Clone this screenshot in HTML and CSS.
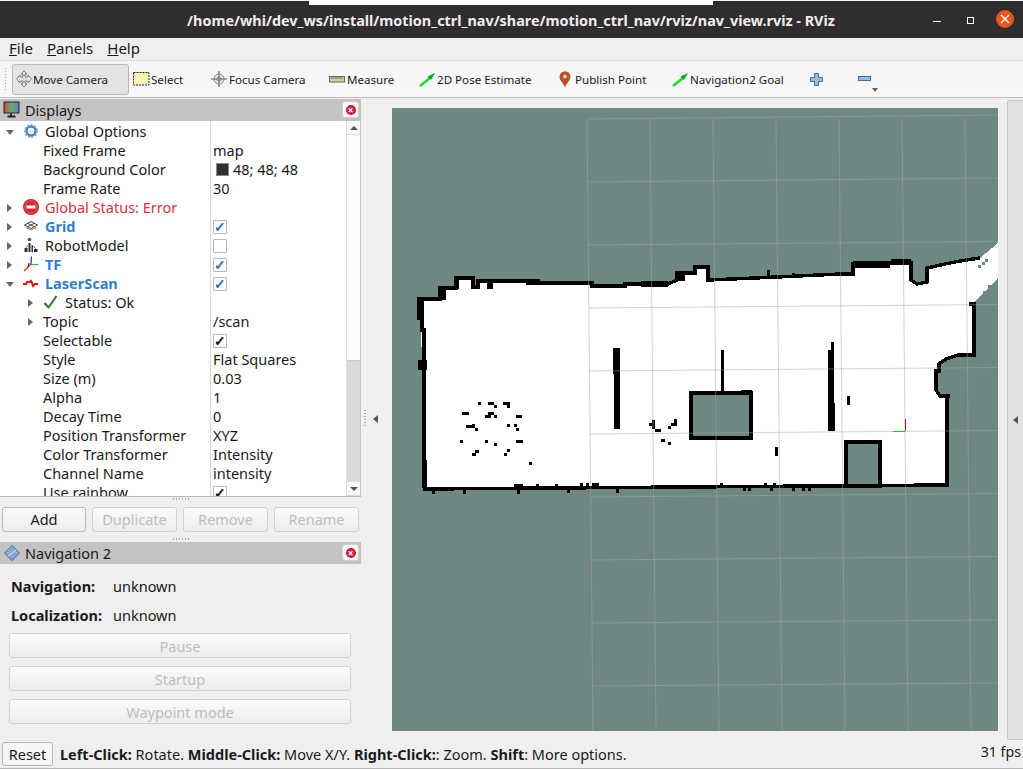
FILE: index.html
```html
<!DOCTYPE html>
<html lang="en">
<head>
<meta charset="utf-8">
<title>RViz</title>
<link rel="stylesheet" href="styles.css">
</head>
<body>
<div class="app">
  <div class="other-window"></div>
  <header class="titlebar">
    <span class="title">/home/whi/dev_ws/install/motion_ctrl_nav/share/motion_ctrl_nav/rviz/nav_view.rviz - RViz</span>
    <span class="win-min"></span>
    <span class="win-max"></span>
    <span class="win-close"><svg width="18" height="18" viewBox="0 0 18 18"><path d="M5 5l8 8M13 5l-8 8" stroke="#fff" stroke-width="1.4"/></svg></span>
  </header>
  <nav class="menubar">
    <span class="menu"><u>F</u>ile</span>
    <span class="menu"><u>P</u>anels</span>
    <span class="menu"><u>H</u>elp</span>
  </nav>
  <div class="toolbar">
    <span class="grip"></span>
    <div class="tool active t-move">
      <svg class="ico" width="18" height="18" viewBox="0 0 18 18"><path d="M9 1l3 3h-2v3h3V5l3.500 4-3.500 4v-2h-3v3h2l-3 3-3-3h2v-3H5v2L1.500 9 5 5v2h3V4H6z" fill="#f4f4f4" stroke="#777" stroke-width="1"/><path d="M9 4v10M4 9h10" stroke="#aaa" stroke-dasharray="1 1"/></svg>
      <span>Move Camera</span>
    </div>
    <div class="tool t-select">
      <svg class="ico" width="17" height="14" viewBox="0 0 17 14"><rect x=".5" y=".5" width="15.500" height="12.500" fill="#fbf6b5" stroke="#222" stroke-dasharray="2 1"/></svg>
      <span>Select</span>
    </div>
    <div class="tool t-focus">
      <svg class="ico" width="18" height="18" viewBox="0 0 18 18"><circle cx="9" cy="9" r="5" fill="#e8e8e8" stroke="#888"/><circle cx="9" cy="9" r="2.200" fill="#ccc" stroke="#888"/><path d="M9 1v16M1 9h16" stroke="#888" stroke-width="1.600"/></svg>
      <span>Focus Camera</span>
    </div>
    <div class="tool t-measure">
      <svg class="ico" width="16" height="7" viewBox="0 0 16 7"><rect x=".5" y=".5" width="15" height="5.500" fill="#d9cd95" stroke="#666"/><path d="M3 1v2M5 1v2M7 1v2M9 1v2M11 1v2M13 1v2" stroke="#777"/></svg>
      <span>Measure</span>
    </div>
    <div class="tool t-pose">
      <svg class="ico" width="17" height="15" viewBox="0 0 17 15"><path d="M1 14L11 6" stroke="#18e028" stroke-width="2.600"/><path d="M16 1L8.500 4.500l3.500 3.500z" fill="#12a020"/></svg>
      <span>2D Pose Estimate</span>
    </div>
    <div class="tool t-pin">
      <svg class="ico" width="12" height="17" viewBox="0 0 12 17"><path d="M6 16.500C4.500 12 .5 9.500.5 5.700a5.500 5.500 0 0 1 11 0C11.500 9.500 7.500 12 6 16.500z" fill="#b5532d"/><circle cx="6" cy="5.500" r="2" fill="#f0c8b0"/></svg>
      <span>Publish Point</span>
    </div>
    <div class="tool t-goal">
      <svg class="ico" width="17" height="15" viewBox="0 0 17 15"><path d="M1 14L11 6" stroke="#18e028" stroke-width="2.600"/><path d="M16 1L8.500 4.500l3.500 3.500z" fill="#12a020"/></svg>
      <span>Navigation2 Goal</span>
    </div>
    <div class="tool t-plus">
      <svg width="13" height="13" viewBox="0 0 13 13"><path d="M4.500.5h4v4h4v4h-4v4h-4v-4h-4v-4h4z" fill="#9dbbe0" stroke="#3a6ea8"/></svg>
    </div>
    <div class="tool t-minus">
      <svg width="13" height="6" viewBox="0 0 13 6"><rect x=".5" y=".5" width="12" height="4" fill="#9dbbe0" stroke="#3a6ea8"/></svg>
      <span class="more"></span>
    </div>
  </div>
  <main class="main">
    <aside class="dock">
      <div class="panel-title">
        <svg class="panel-ico" width="18" height="18" viewBox="0 0 18 18"><defs><linearGradient id="scr"><stop offset="0" stop-color="#c8474a"/><stop offset=".5" stop-color="#62b06a"/><stop offset="1" stop-color="#6a78c8"/></linearGradient></defs><rect x="1" y="1" width="15" height="11" fill="url(#scr)" stroke="#222"/><path d="M8 12.500v2M4.500 15.500h8" stroke="#222" stroke-width="2"/></svg>
        <span>Displays</span>
        <span class="closer"><i>×</i></span>
      </div>
      <div class="tree">
        <div class="rows">
          <div class="row"><div class="name l1"><span class="arr open"></span><svg class="ti" width="16" height="16" viewBox="0 0 16 16"><circle cx="8" cy="8" r="4.500" fill="none" stroke="#4d7fc4" stroke-width="2.500"/><circle cx="8" cy="8" r="6" fill="none" stroke="#7aa0d8" stroke-width="1.800" stroke-dasharray="2 1.400"/><circle cx="8" cy="8" r="2" fill="#dde8f6"/></svg><span>Global Options</span></div><div class="val"></div></div>
          <div class="row"><div class="name l2">Fixed Frame</div><div class="val">map</div></div>
          <div class="row"><div class="name l2">Background Color</div><div class="val"><span class="swatch"></span>48; 48; 48</div></div>
          <div class="row"><div class="name l2">Frame Rate</div><div class="val">30</div></div>
          <div class="row"><div class="name l1"><span class="arr"></span><svg class="ti" width="16" height="16" viewBox="0 0 16 16"><circle cx="8" cy="8" r="8" fill="#cf1f25"/><circle cx="8" cy="8" r="6.300" fill="#d9292e" stroke="#e8e8e8" stroke-width=".3"/><rect x="3.500" y="6.500" width="9" height="3" fill="#fff"/></svg><span class="err">Global Status: Error</span></div><div class="val"></div></div>
          <div class="row"><div class="name l1"><span class="arr"></span><svg class="ti" width="16" height="16" viewBox="0 0 16 16"><path d="M1.500 7L8 3.500 14.500 7 8 10.500zM4.500 5.200L11.500 8.800M11.500 5.200L4.500 8.800" fill="none" stroke="#444"/><path d="M3 9.500L8 12l5-2.500" fill="none" stroke="#777"/></svg><b class="on">Grid</b></div><div class="val"><span class="chk blue">✓</span></div></div>
          <div class="row"><div class="name l1"><span class="arr"></span><svg class="ti" width="16" height="16" viewBox="0 0 16 16"><circle cx="6.500" cy="2.500" r="1.800" fill="#3a5a8c"/><path d="M1.500 15v-4h3v4zM5.500 15V6h2v9zM8.500 15V8h1.500v7zM11 15v-3h3.500v3z" fill="#333"/><path d="M3 11l3-4M9 8l4 4" stroke="#777"/></svg><span>RobotModel</span></div><div class="val"><span class="chk"></span></div></div>
          <div class="row"><div class="name l1"><span class="arr"></span><svg class="ti" width="16" height="16" viewBox="0 0 16 16"><path d="M8 8L8.500 .5" stroke="#2030d0" stroke-width="1.200"/><path d="M8 8.500h7.500" stroke="#20d020" stroke-width="1.200"/><path d="M8 8L1 15" stroke="#e02020" stroke-width="1.200"/><path d="M5 11l1-4" stroke="#222"/></svg><b class="on">TF</b></div><div class="val"><span class="chk blue">✓</span></div></div>
          <div class="row"><div class="name l1"><span class="arr open"></span><svg class="ti" width="16" height="16" viewBox="0 0 16 16"><path d="M0 9h3l1-2h3l1-1 1 2 1 3 1-1 1-1h3" fill="none" stroke="#ee1010" stroke-width="2"/></svg><b class="on">LaserScan</b></div><div class="val"><span class="chk blue">✓</span></div></div>
          <div class="row"><div class="name l3"><span class="arr"></span><svg class="ti" width="16" height="16" viewBox="0 0 16 16"><path d="M1.500 9l4 4.500L13.500 2" fill="none" stroke="#2a7a2a" stroke-width="2"/></svg><span>Status: Ok</span></div><div class="val"></div></div>
          <div class="row"><div class="name l2 has-arr"><span class="arr"></span>Topic</div><div class="val">/scan</div></div>
          <div class="row"><div class="name l2">Selectable</div><div class="val"><span class="chk">✓</span></div></div>
          <div class="row"><div class="name l2">Style</div><div class="val">Flat Squares</div></div>
          <div class="row"><div class="name l2">Size (m)</div><div class="val">0.03</div></div>
          <div class="row"><div class="name l2">Alpha</div><div class="val">1</div></div>
          <div class="row"><div class="name l2">Decay Time</div><div class="val">0</div></div>
          <div class="row"><div class="name l2">Position Transformer</div><div class="val">XYZ</div></div>
          <div class="row"><div class="name l2">Color Transformer</div><div class="val">Intensity</div></div>
          <div class="row"><div class="name l2">Channel Name</div><div class="val">intensity</div></div>
          <div class="row"><div class="name l2">Use rainbow</div><div class="val"><span class="chk">✓</span></div></div>
        </div>
        <div class="vscroll">
          <div class="sb-btn"><span class="up"></span></div>
          <div class="sb-thumb"></div>
          <div class="sb-track"></div>
          <div class="sb-btn"><span class="down"></span></div>
        </div>
      </div>
      <div class="hgrip"></div>
      <div class="actions">
        <button class="btn">Add</button>
        <button class="btn" disabled>Duplicate</button>
        <button class="btn" disabled>Remove</button>
        <button class="btn" disabled>Rename</button>
      </div>
      <div class="hgrip second"></div>
      <div class="panel-title nav-title">
        <svg class="panel-ico" width="18" height="18" viewBox="0 0 18 18"><path d="M9 1.500L16.500 9 9 16.500 1.500 9z" fill="#8ea6d6" stroke="#3f5f9f"/><path d="M5 12L13 6" stroke="#dfe7f6"/></svg>
        <span>Navigation 2</span>
        <span class="closer"><i>×</i></span>
      </div>
      <div class="nav-body">
        <div class="status-line"><b>Navigation:</b><span>unknown</span></div>
        <div class="status-line"><b>Localization:</b><span>unknown</span></div>
        <button class="btn wide" disabled>Pause</button>
        <button class="btn wide" disabled>Startup</button>
        <button class="btn wide" disabled>Waypoint mode</button>
      </div>
    </aside>
    <section class="center">
      <div class="side-split"><span class="dots"></span><span class="tri-left"></span></div>
      <svg class="view" width="606" height="623" viewBox="392 108 606 623">
        <g shape-rendering="crispEdges">
          <path fill="#fff" d="M421 299H440V288H456V278H473V287H478V281H528V283H592V286H625V284H668L677 280V273H695V267H708V280L755 278 840 274H853V264L890 263H911V280L917 284 927 282V268L945 264 960 261 980 258 998 243V278L973 304V355H958L946 359 939 364V371H936V390L940 396H947V485L423 489Z"/>
          <path fill="none" stroke="#000" stroke-width="3.500" d="M424 488V330H422V299H440V288H456V278H473V287H478V281H528V283H592V286H625V284H668L677 280V273H695V267H708V280L755 278 840 274H853V264L890 263H911V280L917 284 927 282V268L945 264 960 261 980 258"/>
          <path fill="none" stroke="#000" stroke-width="3.500" d="M969 304H974V355H958L946 359 939 364V371H936V390L940 396H950M947 396V485L423 489"/>
          <path fill="#000" d="M417 297h7v23h-7zM418 360h9v10h-9zM422 460h5v28h-5zM439 286h7v14h-7zM455 276h4v13h-4zM455 276h19v4h-19zM471 280h4v9h-4zM477 279h8v4h-8zM487 280h6v9h-6zM528 279h12v5h-12zM641 281h27v6h-27zM676 271h9v10h-9zM853 261h37v7h-37zM891 259h20v3h-20zM972 306h3v17h-3zM767 270h3v8h-3zM792 273h3v4h-3zM514 484h9v4h-9zM536 484h3v4h-3zM555 484h3v4h-3zM580 483h3v4h-3zM586 483h3v4h-3zM592 483h7v4h-7zM720 483h3v3h-3zM764 483h3v3h-3zM773 483h3v3h-3zM432 490h3v4h-3zM463 490h3v4h-3zM517 490h3v4h-3zM567 489h3v4h-3zM616 489h3v4h-3zM743 486h3v5h-3zM748 486h3v5h-3zM770 486h3v5h-3zM792 486h3v5h-3zM802 486h3v5h-3zM808 486h3v5h-3z"/>
          <path fill="#000" d="M613 348h7v26h-7zM614 374h6v55h-6zM721 350h3v43h-3zM831 342h3v8h-3zM828 350h6v53h-6zM828 403h7v28h-7zM847 396h3v9h-3zM775 447h3v9h-3z"/>
          <path fill="#000" d="M478 402h3v3h-3zM488 402h6v3h-6zM494 405h3v3h-3zM503 402h7v3h-7zM507 405h3v3h-3zM462 412h7v3h-7zM488 412h6v3h-6zM485 415h6v3h-6zM494 415h3v3h-3zM516 415h6v3h-6zM466 425h9v3h-9zM472 424h3v3h-3zM475 428h3v3h-3zM507 424h3v3h-3zM514 424h3v3h-3zM516 428h3v3h-3zM460 440h3v3h-3zM485 440h3v3h-3zM494 443h3v3h-3zM516 440h7v3h-7zM475 450h4v3h-4zM472 453h4v3h-4zM507 449h3v3h-3zM504 453h3v3h-3zM529 462h3v3h-3zM649 423h6v3h-6zM652 420h3v9h-3zM655 429h6v3h-6zM668 426h3v3h-3zM671 423h6v3h-6zM674 419h3v5h-3zM661 439h4v3h-4zM668 442h3v3h-3z"/>
          <path fill="#6f8782" stroke="#000" stroke-width="3.500" d="M691 393H751V438H691Z"/>
          <path fill="#000" d="M741 390h11v5h-11z"/>
          <path fill="#6f8782" stroke="#000" stroke-width="3.500" d="M846 442H880V486H846Z"/>
          <path fill="#6f8782" d="M985 259h3v3h-3zM982 262h3v3h-3zM978 265h3v3h-3zM997 278h3v3h-3zM988 285h3v3h-3zM983 291h3v3h-3z"/>
        </g>
        <g class="grid">
          <path d="M587 119L593 731M650 119L656 731M713 119L719 731M776 119L782 731M839 119L845 731M902 119L908 731M965 119L971 731"/>
          <path d="M587 119L998 115M588 182L998 178M588 245L998 241.500M589 308L998 304.500M589 371L998 367.500M590 434L998 430.500M591 497L998 493.500M591 560L998 556.500M592 623L998 620M592 686L998 683"/>
        </g>
        <path d="M893 431.500h12" stroke="#1fc21f" stroke-width="1.500" fill="none" shape-rendering="crispEdges"/>
        <path d="M905.500 419v12" stroke="#c8102a" stroke-width="1.500" fill="none" shape-rendering="crispEdges"/>
      </svg>
      <div class="gap-right"></div>
    </section>
    <aside class="right-dock"><span class="tri-left"></span></aside>
  </main>
  <footer class="statusbar">
    <button class="btn reset">Reset</button>
    <span class="help"><b>Left-Click:</b> Rotate. <b>Middle-Click:</b> Move X/Y. <b>Right-Click:</b>: Zoom. <b>Shift</b>: More options.</span>
    <span class="fps">31 fps</span>
  </footer>
</div>
</body>
</html>
```
FILE: styles.css
```css
* { box-sizing: border-box; }
html, body { margin: 0; padding: 0; }
body { width: 1023px; height: 769px; overflow: hidden; background: #efefef; }
.app {
  position: relative; display: flex; flex-direction: column; width: 1023px; height: 769px;
  font-family: "Noto Sans", "Open Sans", sans-serif; font-size: 14.5px; color: #1a1a1a; background: #efefef;
}
.other-window { position: absolute; z-index: 1; left: 309px; top: 0; width: 404px; height: 5px; background: #fff; }
.titlebar {
  position: relative; height: 38px; flex: none; display: flex; align-items: center; justify-content: center;
  background: #302d2e; border-top: 1px solid #f4f4f4;
}
.title { color: #f0eeee; font-weight: 700; font-size: 14.4px; margin-right: 1px; padding-top: 2px; white-space: nowrap; }
.win-min { position: absolute; left: 933px; top: 20px; width: 8px; height: 1px; background: #fff; }
.win-max { position: absolute; left: 967px; top: 16px; width: 7px; height: 7px; border: 1px solid #fff; }
.win-close {
  position: absolute; left: 996px; top: 9px; width: 18px; height: 18px; border-radius: 50%; background: #e9541f;
}
.menubar { height: 22px; flex: none; display: flex; align-items: center; gap: 14px; padding: 0 0 3px 9px; background: #efefef; font-size: 15px; }
.toolbar {
  height: 38px; flex: none; display: flex; align-items: center; padding-left: 4px;
  background: linear-gradient(#f5f5f5, #f8f8f8); border-top: 1px solid #dcdcdc; border-bottom: 1px solid #bdbdbd;
  font-size: 11.6px; position: relative;
}
.grip { width: 4px; height: 24px; margin-right: 4px; background-image: radial-gradient(#aaa 40%, transparent 45%); background-size: 3px 3px; }
.tool { display: flex; align-items: center; flex: none; height: 31px; white-space: nowrap; position: relative; }
.ico { flex: none; }
.active { background: #e4e4e4; border: 1px solid #b8b8b8; border-radius: 3px; padding-left: 2px; }
.t-move { width: 117px; margin-right: 4px; }
.t-select { width: 77px; gap: 1px; }
.t-focus { width: 119px; gap: 1px; }
.t-measure { width: 90px; gap: 2px; }
.t-pose { width: 140px; gap: 1px; }
.t-pin { width: 113px; gap: 4px; }
.t-goal { width: 138px; gap: 1px; }
.t-plus { width: 48px; }
.t-minus { width: 30px; }
.more {
  position: absolute; left: 14px; top: 24px; width: 0; height: 0;
  border-left: 3px solid transparent; border-right: 3px solid transparent; border-top: 4px solid #666;
}
.main { flex: 1; min-height: 0; display: flex; padding-top: 1px; }
.dock { width: 361px; flex: none; display: flex; flex-direction: column; }
.panel-title {
  height: 22px; flex: none; display: flex; align-items: center; background: #c3c3c3; padding-left: 3px; position: relative;
}
.panel-ico { margin-right: 4px; flex: none; }
.closer {
  position: absolute; right: 2px; top: 2px; width: 17px; height: 17px; background: #f7f7f7; border: 1px solid #d0d0d0; border-radius: 3px;
  display: flex; align-items: center; justify-content: center;
}
.closer i {
  width: 10px; height: 10px; border-radius: 50%; background: #d01c3c; color: #fff; font-style: normal; font-size: 10px; line-height: 10px;
  text-align: center; font-weight: 700;
}
.tree { height: 376px; flex: none; display: flex; background: #fff; border-bottom: 1px solid #b8b8b8; border-right: 1px solid #c4c4c4; overflow: hidden; }
.rows { flex: 1; min-width: 0; padding-top: 1px; }
.row { height: 19px; display: flex; align-items: center; white-space: nowrap; }
.name { width: 211px; height: 19px; flex: none; position: relative; line-height: 19px; }
.name::after { content: ""; position: absolute; right: 0; top: -1px; bottom: -1px; width: 1px; background: #d8d8d8; }
.val { flex: 1; padding-left: 2px; line-height: 19px; display: flex; align-items: center; height: 19px; }
.l1 { padding-left: 45px; }
.l2 { padding-left: 43px; }
.l3 { padding-left: 65px; }
.arr {
  position: absolute; left: 7px; top: 6px; width: 0; height: 0;
  border-top: 4px solid transparent; border-bottom: 4px solid transparent; border-left: 5px solid #666;
}
.arr.open { left: 6px; top: 8px; border: 4px solid transparent; border-top: 5px solid #666; border-bottom: 0; }
.l3 .arr, .has-arr .arr { left: 28px; }
.ti { position: absolute; left: 23px; top: 1px; }
.l3 .ti { left: 43px; }
.err { color: #d3343c; }
.on { color: #2f7fd0; font-weight: 700; }
.swatch { width: 13px; height: 13px; margin: 0 4px 0 3px; background: #303030; border: 1px solid #888; }
.chk {
  width: 14px; height: 14px; border: 1px solid #b8b8b8; background: #fff; display: flex; align-items: center; justify-content: center;
  font-size: 14px; line-height: 12px; font-weight: 700; color: #111; border-radius: 1px;
}
.chk.blue { color: #2d6fb8; }
.vscroll { width: 14px; flex: none; display: flex; flex-direction: column; border-left: 1px solid #dcdcdc; background: #fff; }
.sb-btn { height: 14px; flex: none; display: flex; align-items: center; justify-content: center; border-bottom: 1px solid #dcdcdc; background: #f8f8f8; }
.up { width: 0; height: 0; border: 4px solid transparent; border-top: 0; border-bottom: 4px solid #555; }
.down { width: 0; height: 0; border: 4px solid transparent; border-bottom: 0; border-top: 4px solid #555; }
.sb-thumb { height: 226px; flex: none; background: #fdfdfd; border-bottom: 1px solid #ccc; }
.sb-track { flex: 1; background: #dadada; }
.hgrip { height: 10px; flex: none; position: relative; }
.hgrip::after {
  content: ""; position: absolute; left: 172px; top: 1px; width: 18px; height: 2px;
  background-image: radial-gradient(#aaa 45%, transparent 50%); background-size: 3px 2px;
}
.hgrip.second { height: 10px; }
.hgrip.second::after { top: 6px; }
.actions { height: 25px; flex: none; display: flex; gap: 6px; padding-left: 2px; }
.actions .btn { width: 85px; padding-bottom: 1px; }
.actions .btn:first-child { width: 84px; }
.btn {
  font: inherit; color: #1a1a1a; height: 25px; background: linear-gradient(#fbfbfb, #ededed); border: 1px solid #b8b8b8; border-radius: 3px; padding: 0;
}
.btn:disabled { color: #bdbdbd; border-color: #d2d2d2; }
.nav-body { flex: 1; display: flex; flex-direction: column; padding: 12px 10px 0 9px; }
.status-line { height: 20px; margin-bottom: 9px; display: flex; align-items: center; padding-left: 2px; }
.status-line b { width: 102px; font-weight: 700; flex: none; }
.wide { width: 342px; margin-bottom: 8px; flex: none; }
.status-line + .wide { margin-top: -1px; }
.center { flex: 1; min-width: 0; display: flex; align-items: flex-start; }
.side-split { width: 31px; height: 100%; flex: none; position: relative; }
.tri-left {
  position: absolute; width: 0; height: 0; border-top: 4px solid transparent; border-bottom: 4px solid transparent; border-right: 5px solid #555;
}
.side-split .tri-left { left: 12px; top: 316px; }
.dots {
  position: absolute; left: 3px; top: 310px; width: 2px; height: 18px;
  background-image: radial-gradient(#aaa 45%, transparent 50%); background-size: 2px 3px;
}
.view { flex: none; margin-top: 9px; background: #6f8782; display: block; }
.grid path { fill: none; stroke: rgba(165, 165, 165, .5); stroke-width: 1; }
.gap-right { width: 9px; flex: none; }
.right-dock {
  width: 16px; flex: none; height: 640px; margin-top: 1px; position: relative; background: #e2e2e2; border: 1px solid #c8c8c8; border-radius: 3px 0 0 3px; border-right: 0;
}
.right-dock .tri-left { left: 5px; top: 315px; }
.statusbar {
  height: 28px; flex: none; display: flex; align-items: center; position: relative; padding: 0 2px 1px; border-bottom: 1px solid #b8b8b8;
}
.reset { width: 51px; height: 24px; flex: none; margin-right: 7px; background: #f6f6f6; }
.help { white-space: nowrap; }
.fps { position: absolute; right: 2px; top: 0; font-size: 14.2px; line-height: 22px; }
```
